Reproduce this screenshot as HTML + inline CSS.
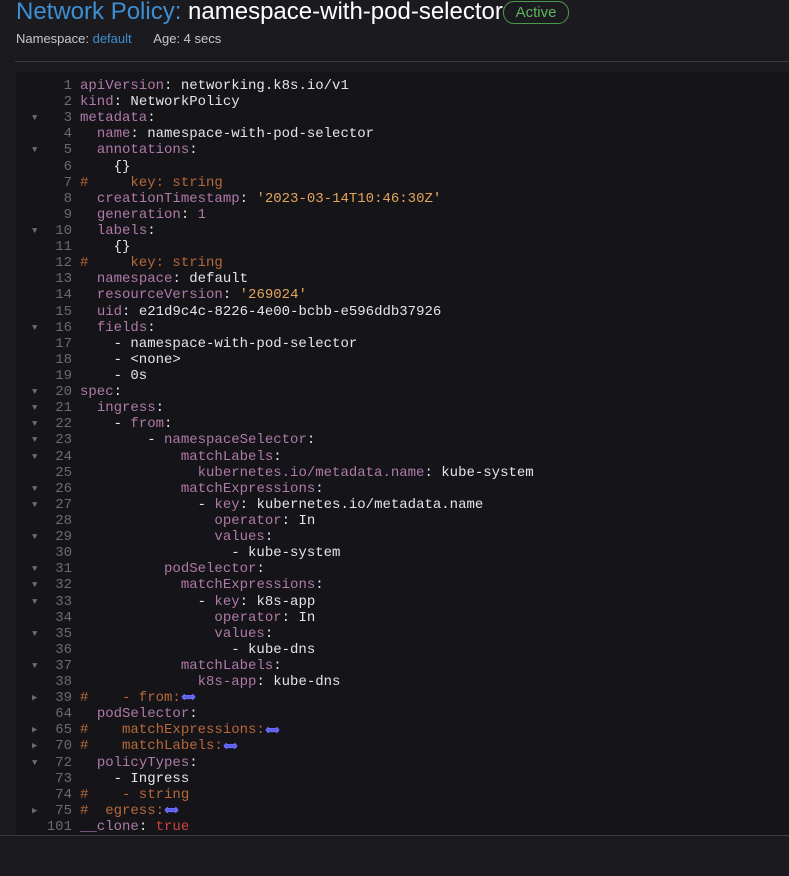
<!DOCTYPE html>
<html><head><style>
body{margin:0;background:#1b1b1f;width:789px;height:876px;overflow:hidden;font-family:"Liberation Sans",sans-serif;position:relative}
.t{position:absolute;left:16px;top:-2px;font-size:24px;color:#fff;white-space:nowrap}
.t b{font-weight:normal;color:#3d8fd1}
.badge{position:absolute;left:503px;top:1px;width:64px;height:21px;border:1px solid #4a9a4a;border-radius:11px;color:#5fb35f;font-size:15px;line-height:21px;text-align:center}
.meta{position:absolute;left:16px;top:31px;font-size:13px;color:#c8c8c8}
.meta a{color:#3d8fd1}
.hr{position:absolute;left:15px;right:0;top:61px;height:1px;background:#3a3a40}
.ed{position:absolute;left:16px;right:0;top:72px;height:763px;background:#141419}
.bot{position:absolute;left:0;right:0;top:835px;height:1px;background:#3a3a40}
.code{position:absolute;left:0;top:78px;font-family:"Liberation Mono",monospace;font-size:14px;line-height:16.12px;color:#e6e6e6}
.l{height:16.12px;position:relative;white-space:pre}
.n{display:inline-block;width:72px;text-align:right;color:#6a6a70;margin-right:8px}
.a{position:absolute;left:32px;color:#6a6a70;font-size:9px}
.k{color:#b07aa8}.c{color:#b8683a}.s{color:#e5a55a}.tr{color:#d0443c}
.f{display:inline-block;vertical-align:middle}
</style></head><body>
<div class="t"><b>Network Policy:</b> namespace-with-pod-selector</div>
<div class="badge">Active</div>
<div class="meta">Namespace: <a>default</a> &nbsp;&nbsp;&nbsp;&nbsp;&nbsp;Age: 4 secs</div>
<div class="hr"></div>
<div class="ed"></div>
<div class="bot"></div>
<svg width="0" height="0" style="position:absolute"><defs><symbol id="fa" viewBox="0 0 16 8"><path d="M1 4 L4 1 M1 4 L4 7 M1 4 H15 M15 4 L12 1 M15 4 L12 7 M3 2.5H13M3 5.5H13" stroke="#6a6aff" stroke-width="1.4" fill="none"/></symbol></defs></svg>
<div class="code"><div class="l"><span class="n">1</span><span class="k">apiVersion</span>: networking.k8s.io/v1</div><div class="l"><span class="n">2</span><span class="k">kind</span>: NetworkPolicy</div><div class="l"><span class="a">▼</span><span class="n">3</span><span class="k">metadata</span>:</div><div class="l"><span class="n">4</span>  <span class="k">name</span>: namespace-with-pod-selector</div><div class="l"><span class="a">▼</span><span class="n">5</span>  <span class="k">annotations</span>:</div><div class="l"><span class="n">6</span>    {}</div><div class="l"><span class="n">7</span><span class="c">#     key: string</span></div><div class="l"><span class="n">8</span>  <span class="k">creationTimestamp</span>: <span class="s">'2023-03-14T10:46:30Z'</span></div><div class="l"><span class="n">9</span>  <span class="k">generation</span>: <span class="k">1</span></div><div class="l"><span class="a">▼</span><span class="n">10</span>  <span class="k">labels</span>:</div><div class="l"><span class="n">11</span>    {}</div><div class="l"><span class="n">12</span><span class="c">#     key: string</span></div><div class="l"><span class="n">13</span>  <span class="k">namespace</span>: default</div><div class="l"><span class="n">14</span>  <span class="k">resourceVersion</span>: <span class="s">'269024'</span></div><div class="l"><span class="n">15</span>  <span class="k">uid</span>: e21d9c4c-8226-4e00-bcbb-e596ddb37926</div><div class="l"><span class="a">▼</span><span class="n">16</span>  <span class="k">fields</span>:</div><div class="l"><span class="n">17</span>    - namespace-with-pod-selector</div><div class="l"><span class="n">18</span>    - &lt;none&gt;</div><div class="l"><span class="n">19</span>    - 0s</div><div class="l"><span class="a">▼</span><span class="n">20</span><span class="k">spec</span>:</div><div class="l"><span class="a">▼</span><span class="n">21</span>  <span class="k">ingress</span>:</div><div class="l"><span class="a">▼</span><span class="n">22</span>    - <span class="k">from</span>:</div><div class="l"><span class="a">▼</span><span class="n">23</span>        - <span class="k">namespaceSelector</span>:</div><div class="l"><span class="a">▼</span><span class="n">24</span>            <span class="k">matchLabels</span>:</div><div class="l"><span class="n">25</span>              <span class="k">kubernetes.io/metadata.name</span>: kube-system</div><div class="l"><span class="a">▼</span><span class="n">26</span>            <span class="k">matchExpressions</span>:</div><div class="l"><span class="a">▼</span><span class="n">27</span>              - <span class="k">key</span>: kubernetes.io/metadata.name</div><div class="l"><span class="n">28</span>                <span class="k">operator</span>: In</div><div class="l"><span class="a">▼</span><span class="n">29</span>                <span class="k">values</span>:</div><div class="l"><span class="n">30</span>                  - kube-system</div><div class="l"><span class="a">▼</span><span class="n">31</span>          <span class="k">podSelector</span>:</div><div class="l"><span class="a">▼</span><span class="n">32</span>            <span class="k">matchExpressions</span>:</div><div class="l"><span class="a">▼</span><span class="n">33</span>              - <span class="k">key</span>: k8s-app</div><div class="l"><span class="n">34</span>                <span class="k">operator</span>: In</div><div class="l"><span class="a">▼</span><span class="n">35</span>                <span class="k">values</span>:</div><div class="l"><span class="n">36</span>                  - kube-dns</div><div class="l"><span class="a">▼</span><span class="n">37</span>            <span class="k">matchLabels</span>:</div><div class="l"><span class="n">38</span>              <span class="k">k8s-app</span>: kube-dns</div><div class="l"><span class="a">▶</span><span class="n">39</span><span class="c">#    - from:</span><svg class="f" width="15" height="8"><use href="#fa"/></svg></div><div class="l"><span class="n">64</span>  <span class="k">podSelector</span>:</div><div class="l"><span class="a">▶</span><span class="n">65</span><span class="c">#    matchExpressions:</span><svg class="f" width="15" height="8"><use href="#fa"/></svg></div><div class="l"><span class="a">▶</span><span class="n">70</span><span class="c">#    matchLabels:</span><svg class="f" width="15" height="8"><use href="#fa"/></svg></div><div class="l"><span class="a">▼</span><span class="n">72</span>  <span class="k">policyTypes</span>:</div><div class="l"><span class="n">73</span>    - Ingress</div><div class="l"><span class="n">74</span><span class="c">#    - string</span></div><div class="l"><span class="a">▶</span><span class="n">75</span><span class="c">#  egress:</span><svg class="f" width="15" height="8"><use href="#fa"/></svg></div><div class="l"><span class="n">101</span><span class="k">__clone</span>: <span class="tr">true</span></div></div>
</body></html>
